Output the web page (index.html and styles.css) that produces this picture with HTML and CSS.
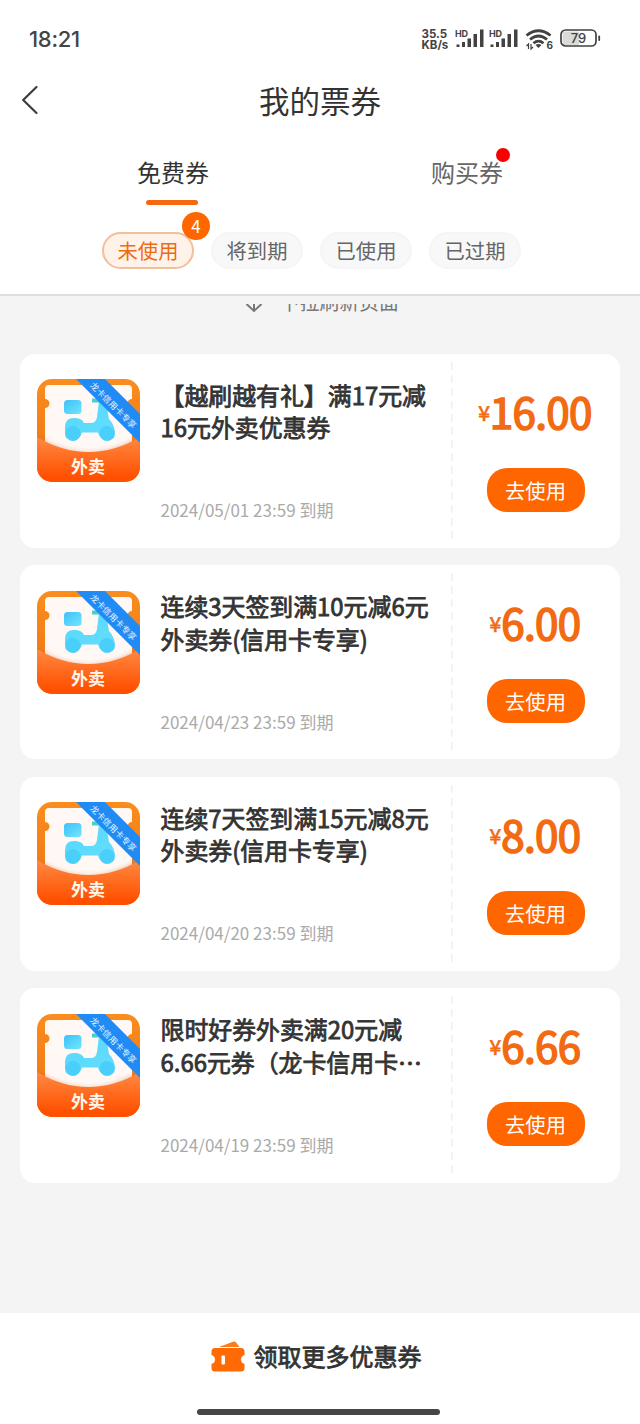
FILE: index.html
```html
<!DOCTYPE html>
<html lang="zh-CN">
<head>
<meta charset="utf-8">
<title>我的票券</title>
<link rel="stylesheet" href="styles.css">
</head>
<body>
<svg class="defs" width="0" height="0" aria-hidden="true">
  <defs>
    <linearGradient id="back" x1="0" y1="0" x2="0" y2="1"><stop offset="0" stop-color="#fa8d1e"/><stop offset="1" stop-color="#f07010"/></linearGradient>
    <linearGradient id="pocket" x1="0" y1="0" x2="0" y2="1"><stop offset="0" stop-color="#ff8a42"/><stop offset=".9" stop-color="#ff5000"/></linearGradient>
    <linearGradient id="body" x1="0" y1="0" x2="1" y2="1"><stop offset="0" stop-color="#52dafc"/><stop offset="1" stop-color="#68dcfc"/></linearGradient>
    <linearGradient id="box" x1="0" y1="0" x2="1" y2="1"><stop offset="0" stop-color="#3ec0f8"/><stop offset="1" stop-color="#70e6ff"/></linearGradient>
    <filter id="shade" x="-10%" y="-20%" width="120%" height="140%"><feGaussianBlur stdDeviation="2"/></filter>
    <clipPath id="tile"><rect width="103" height="103" rx="15"/></clipPath>
    <symbol id="takeout" viewBox="0 0 103 103">
      <g clip-path="url(#tile)">
        <rect width="103" height="103" fill="url(#back)"/>
        <path d="M12 6H91Q95 6 95 10V20A4.500 4.500 0 0 0 95 29V75H8V29A4.500 4.500 0 0 0 8 20V10Q8 6 12 6Z" fill="#fff8f4"/>
        <path d="M55 19.500h8v4h-8z" fill="#4bcfc8"/>
        <path d="M28 55V48Q28 39 37 39Q45 39 47 44H54Q59 44 60 38L62 22H69L72 40Q78 46 78 55Q78 61 70 61Q63 61 61 53.500H45Q43 61 36 61Q28 61 28 55Z" fill="url(#body)"/>
        <rect x="27" y="21" width="17.500" height="14" rx="3.500" fill="url(#box)"/>
        <circle cx="36" cy="54.500" r="7.500" fill="#49cffa"/>
        <circle cx="70" cy="54.500" r="7.500" fill="#49cffa"/>
        <path d="M0 57Q51 89 103 57V75H0Z" fill="#c96b38" opacity=".4" filter="url(#shade)"/>
        <path d="M0 58Q25 73 51.500 73T103 58V103H0Z" fill="url(#pocket)"/>
        <path d="M39 0H68L103 35V64Z" fill="#208bf4"/>
        <text class="ribbon-text" transform="translate(52.500 7) rotate(45)" textLength="61">龙卡信用卡专享</text>
        <text class="tile-text" x="51" y="94" text-anchor="middle">外卖</text>
      </g>
    </symbol>
    <symbol id="signal" viewBox="0 0 30 22">
      <text class="hd" x="0" y="8" textLength="13">HD</text>
      <path d="M1.500 18H4.500V15.500H1.500ZM7 18H10V13H7ZM12.500 18H16V9.500H12.500ZM18.500 18H22V5H18.500ZM25 18H28.500V.5H25Z" fill="#424242"/>
    </symbol>
  </defs>
</svg>
<div class="screen">
  <div class="status">
    <span class="clock">18:21</span>
    <div class="indicators">
      <div class="speed"><span>35.5</span><span>KB/s</span></div>
      <svg class="sig" width="30" height="22"><use href="#signal"/></svg>
      <svg class="sig second" width="30" height="22"><use href="#signal"/></svg>
      <svg class="wifi" width="28" height="22" viewBox="0 0 28 22">
        <g fill="none" stroke="#424242" stroke-width="2.800"><path d="M1.500 6.500Q13.500-3 25.500 6.500"/><path d="M5 10.500Q13.500 3.500 22 10.500"/><path d="M8.500 14.200Q13.500 10 18.500 14.200"/></g>
        <path d="M10.500 16Q13.500 14 16.500 16L13.500 19Z" fill="#424242"/>
        <path d="M3.500 20V15L1.500 17M6 15V20L8 18" fill="none" stroke="#424242" stroke-width="1.200"/>
        <text class="wifi-six" x="21.500" y="20">6</text>
      </svg>
      <svg class="battery" width="42" height="20" viewBox="0 0 42 20">
        <path d="M5 2.500H19V16.500H5Q2.500 16.500 2.500 14V5Q2.500 2.500 5 2.500Z" fill="#dadada"/>
        <rect x="1" y="1" width="35" height="16" rx="4.500" fill="none" stroke="#424242" stroke-width="1.700"/>
        <path d="M39.200 7.500V11" stroke="#424242" stroke-width="1.800" stroke-linecap="round"/>
        <text class="level" x="18.500" y="14" text-anchor="middle">79</text>
      </svg>
    </div>
  </div>
  <div class="nav">
    <svg class="chevron" width="20" height="32" viewBox="0 0 20 32"><path d="M16.500 3L3.200 16L16.500 29" fill="none" stroke="#3c3c3c" stroke-width="2.200" stroke-linecap="round" stroke-linejoin="round"/></svg>
    <h1 class="heading">我的票券</h1>
  </div>
  <div class="tabs">
    <div class="tab active"><span class="tab-label">免费券</span></div>
    <div class="tab"><span class="tab-label">购买券<i class="dot"></i></span></div>
  </div>
  <div class="filters">
    <div class="pill selected">未使用<b class="count">4</b></div>
    <div class="pill">将到期</div>
    <div class="pill">已使用</div>
    <div class="pill">已过期</div>
  </div>
  <main class="content">
    <div class="refresh">
      <svg width="18" height="20" viewBox="0 0 18 20"><path d="M9 1V18M1.500 11L9 18L16.500 11" fill="none" stroke="#777" stroke-width="2"/></svg>
      <span>下拉刷新页面</span>
    </div>
    <div class="cards">
      <article class="card">
        <svg class="thumb"><use href="#takeout"/></svg>
        <div class="info"><h2 class="name">【越刷越有礼】满17元减<br>16元外卖优惠券</h2><p class="date">2024/05/01 23:59 到期</p></div>
        <div class="action"><div class="price"><small>¥</small>16.00</div><div class="use">去使用</div></div>
      </article>
      <article class="card">
        <svg class="thumb"><use href="#takeout"/></svg>
        <div class="info"><h2 class="name">连续3天签到满10元减6元<br>外卖券(信用卡专享)</h2><p class="date">2024/04/23 23:59 到期</p></div>
        <div class="action"><div class="price"><small>¥</small>6.00</div><div class="use">去使用</div></div>
      </article>
      <article class="card">
        <svg class="thumb"><use href="#takeout"/></svg>
        <div class="info"><h2 class="name">连续7天签到满15元减8元<br>外卖券(信用卡专享)</h2><p class="date">2024/04/20 23:59 到期</p></div>
        <div class="action"><div class="price"><small>¥</small>8.00</div><div class="use">去使用</div></div>
      </article>
      <article class="card">
        <svg class="thumb"><use href="#takeout"/></svg>
        <div class="info"><h2 class="name">限时好券外卖满20元减<br>6.66元券（龙卡信用卡…</h2><p class="date">2024/04/19 23:59 到期</p></div>
        <div class="action"><div class="price"><small>¥</small>6.66</div><div class="use">去使用</div></div>
      </article>
    </div>
  </main>
  <footer class="footer">
    <div class="more">
      <svg width="34" height="32" viewBox="0 0 34 32">
        <path d="M8 6L22 .8Q24 0 25.500 2L28.500 6Z" fill="#ff7a1c"/>
        <path d="M4 7H30Q33.500 7 33.500 10.500V14Q30 15 30 18.500T33.500 23V27Q33.500 30.500 30 30.500H4Q.5 30.500 .5 27V23Q4 22 4 18.500T.5 14V10.500Q.5 7 4 7Z" fill="#ff6a05"/>
        <rect x="10.500" y="14.500" width="3.500" height="9" rx="1" fill="#fff"/>
      </svg>
      <span>领取更多优惠券</span>
    </div>
    <div class="home-bar"></div>
  </footer>
</div>
</body>
</html>
```
FILE: styles.css
```css
* { box-sizing: border-box; }
body { margin: 0; background: #fff; font-family: "Noto Sans CJK SC", sans-serif; color: #333; }
h1, h2, p { margin: 0; font-weight: 400; }
.defs { position: absolute; }
.screen { width: 640px; height: 1424px; display: flex; flex-direction: column; overflow: hidden; }

.status { height: 76px; padding: 0 38.500px 0 29px; display: flex; align-items: center; justify-content: space-between; }
.clock { font: 500 22px/30px Inter, sans-serif; letter-spacing: -.3px; color: #444; margin-top: 2px; }
.indicators { display: flex; align-items: center; }
.speed { width: 33px; display: flex; flex-direction: column; font: 700 11.500px/11px Inter, sans-serif; color: #424242; margin-top: 3px; }
.sig { margin-top: 4px; }
.second { margin-left: 4px; }
.wifi { margin: 3px 0 0 6px; }
.battery { margin: 2px 0 0 7px; }
.hd { font: 700 9px Inter, sans-serif; fill: #424242; }
.wifi-six { font: 700 10px Inter, sans-serif; fill: #424242; }
.level { font: 500 13px Inter, sans-serif; fill: #424242; }

.nav { height: 50px; display: flex; align-items: center; padding-left: 20px; }
.chevron { flex: none; margin-bottom: 2px; }
.heading { flex: 1; margin: 0 40px 2px 0; text-align: center; font-size: 30.500px; line-height: 44px; }

.tabs { height: 80px; padding: 26px 26px 0; display: flex; }
.tab { flex: 1; display: flex; flex-direction: column; align-items: center; font-size: 24px; line-height: 40px; color: #666; }
.tab-label { position: relative; }
.active { color: #333; }
.active::after { content: ""; width: 52px; height: 5px; margin: 8px 3px 0 0; border-radius: 3px; background: #f56a10; }
.dot { position: absolute; right: -7px; top: -4px; width: 14px; height: 14px; border-radius: 50%; background: #f80000; }

.filters { height: 90px; padding: 26px 0 0 102px; display: flex; gap: 17px; border-bottom: 2px solid #dedede; }
.pill { position: relative; width: 92px; height: 37px; border: 2px solid #f5f5f5; border-radius: 19px; background: #f8f8f8; color: #666; text-align: center; font-size: 20.300px; line-height: 33px; }
.selected { border-color: #f2bf9c; background: #fff3e9; color: #ee6b12; }
.count { position: absolute; left: 78px; top: -22px; width: 28px; height: 28px; border-radius: 50%; background: #ff6600; color: #fff; font-size: 17px; line-height: 28px; font-weight: 400; }

.content { flex: 1; min-height: 0; padding-top: 8px; background: #f4f4f4; }
.refresh { height: 49.500px; overflow: hidden; display: flex; align-items: flex-start; padding-left: 245px; gap: 17px; font-size: 19.800px; line-height: 24px; color: #777; }
.refresh svg { margin-top: -11px; }
.refresh span { margin-top: -14px; }
.cards { padding: 0 20.500px 0 20px; display: flex; flex-direction: column; gap: 17.300px; }
.card { height: 194.300px; display: flex; background: #fff; border-radius: 15px; padding-left: 17px; }
.thumb { width: 103px; height: 103px; margin: 25.500px 20.500px 0 0; flex: none; }
.info { width: 290px; display: flex; flex-direction: column; padding: 25px 0 23.500px; }
.name { white-space: nowrap; font-size: 23.900px; line-height: 32.500px; -webkit-text-stroke: .8px #333; }
.date { margin-top: auto; font-size: 17px; line-height: 28px; color: #aaa; }
.action { flex: 1; margin: 8px 0; display: flex; flex-direction: column; align-items: center; background: repeating-linear-gradient(#efefef 0 8px, transparent 8px 13px) 0 0 / 1.500px 100% no-repeat; }
.price { height: 70px; margin-top: 14px; line-height: 70px; font-size: 42px; letter-spacing: -.6px; color: #f26a12; -webkit-text-stroke: 1.700px #f26a12; }
.price small { font-size: 21px; letter-spacing: 0; vertical-align: 8px; line-height: 1; -webkit-text-stroke-width: .7px; }
.use { margin: 22px 0 0 1px; width: 98px; height: 44px; border-radius: 20px; background: #ff6600; color: #fff; text-align: center; font-size: 20.300px; line-height: 44px; }
.ribbon-text { font-size: 8.500px; fill: #e4f3ff; }
.tile-text { font-size: 17px; font-weight: 700; fill: #fff8ef; }

.footer { height: 111px; background: #fff; display: flex; flex-direction: column; align-items: center; }
.more { height: 88px; padding-right: 8px; display: flex; align-items: center; gap: 9px; font-size: 24px; -webkit-text-stroke: .8px #333; }
.more span { margin-top: -3px; }
.more svg { -webkit-text-stroke: 0; }
.home-bar { margin: 7.500px 3px 0 0; width: 243px; height: 6px; border-radius: 3px; background: #464646; }
```
